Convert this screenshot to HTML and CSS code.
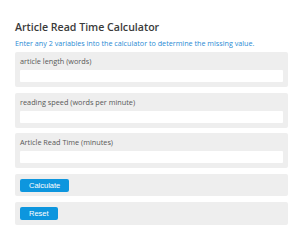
FILE: index.html
```html
<!DOCTYPE html>
<html>
<head>
  <title>Article Read Time Calculator</title>
  <meta charset="UTF-8">
  <link rel="stylesheet" href="styles.css">
</head>
<body>
  <div class="calc">
    <h2 class="calc-title">Article Read Time Calculator</h2>
    <p class="calc-intro">Enter any 2 variables into the calculator to determine the missing value.</p>

    <div class="field">
      <label for="length">article length (words)</label>
      <input type="text" id="length">
    </div>
    <div class="field">
      <label for="speed">reading speed (words per minute)</label>
      <input type="text" id="speed">
    </div>
    <div class="field">
      <label for="time">Article Read Time (minutes)</label>
      <input type="text" id="time">
    </div>

    <div class="field field-btn">
      <button class="btn">Calculate</button>
    </div>
    <div class="field field-btn">
      <button class="btn">Reset</button>
    </div>
  </div>
</body>
</html>
```

FILE: styles.css
```css
body {
  margin: 0;
  font-family: "Open Sans", Arial, sans-serif;
  background: #fff;
}
.calc {
  width: 273px;
  margin-left: 15px;
  padding-top: 19px;
  display: flex;
  flex-direction: column;
  gap: 5.5px;
}
.calc-title {
  margin: 0;
  font-size: 10.6px;
  font-weight: 600;
  color: #3a3a3a;
  line-height: 16px;
}
.calc-intro {
  margin: -3px 0 -1px 0;
  font-size: 7.2px;
  color: #2a8bd4;
  line-height: 10px;
}
.field {
  background-color: #eeeeee;
  border-radius: 2px;
  padding: 4px 5px 5px 5px;
  display: flex;
  flex-direction: column;
  gap: 4px;
}
.field label {
  font-size: 7.3px;
  color: #585858;
  line-height: 10px;
}
.field input {
  height: 12px;
  border: none;
  border-radius: 1px;
  background: #fff;
  padding: 0;
}
.field-btn {
  padding: 5px 5px 4.5px 5px;
  align-items: flex-start;
}
.btn {
  height: 13.4px;
  padding: 0 9px;
  border: none;
  border-radius: 2px;
  background-color: #0d96de;
  color: #fff;
  font-family: "Liberation Sans", Arial, sans-serif;
  font-size: 7.5px;
  cursor: pointer;
}
```
